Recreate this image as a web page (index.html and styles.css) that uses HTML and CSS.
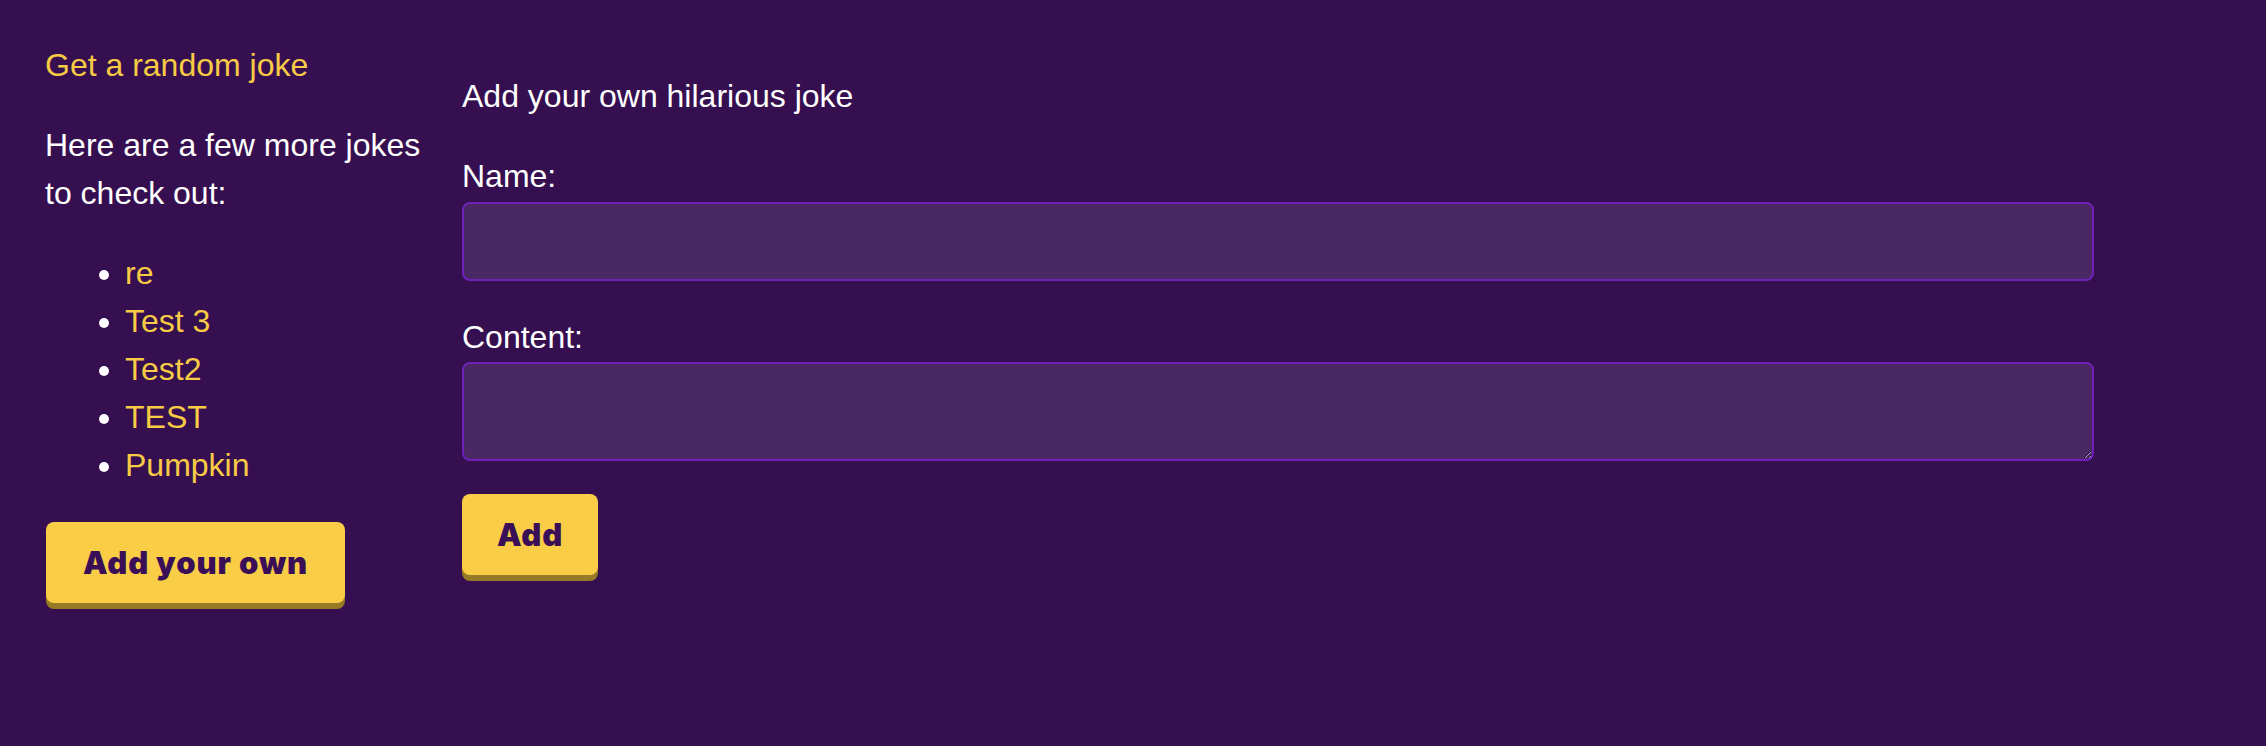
FILE: index.html
```html
<!DOCTYPE html>
<html lang="en">
<head>
<meta charset="utf-8">
<title>Jokes</title>
<link rel="stylesheet" href="styles.css">
</head>
<body>
<div class="page">
  <aside class="sidebar">
    <a class="random-link" href="#">Get a random joke</a>
    <p class="intro">Here are a few more jokes to check out:</p>
    <ul class="joke-list">
      <li><a href="#">re</a></li>
      <li><a href="#">Test 3</a></li>
      <li><a href="#">Test2</a></li>
      <li><a href="#">TEST</a></li>
      <li><a href="#">Pumpkin</a></li>
    </ul>
    <button class="btn" type="button">Add your own</button>
  </aside>
  <main class="main">
    <p class="heading">Add your own hilarious joke</p>
    <form class="joke-form">
      <label class="field-label" for="name">Name:</label>
      <input class="field-input" id="name" type="text">
      <label class="field-label" for="content">Content:</label>
      <textarea class="field-input field-textarea" id="content"></textarea>
      <div class="actions">
        <button class="btn btn-small" type="submit">Add</button>
      </div>
    </form>
  </main>
</div>
</body>
</html>
```
FILE: styles.css
```css
html, body {
  margin: 0;
  padding: 0;
  background: #360f50;
  height: 100%;
}

body {
  font-family: "Liberation Sans", Arial, Helvetica, sans-serif;
  font-size: 32px;
  line-height: 48px;
  color: #ffffff;
}

.page {
  display: flex;
  align-items: flex-start;
  gap: 31px;
  padding: 41px 0 0 45px;
}

.sidebar {
  width: 386px;
  flex: none;
  display: flex;
  flex-direction: column;
  align-items: flex-start;
}

a {
  color: #f8cb45;
  text-decoration: none;
}

.random-link {
  display: block;
}

.intro {
  margin: 32px 0 0;
}

.joke-list {
  margin: 32px 0 0;
  padding-left: 80px;
}

.joke-list li {
  height: 48px;
}

.btn {
  font-family: Inter, "Open Sans", sans-serif;
  font-weight: 900;
  font-size: 31px;
  letter-spacing: 0.9px;
  color: #3a0f58;
  background: #f9cd46;
  border: none;
  border-radius: 8px;
  height: 81px;
  padding: 0 37px;
  box-shadow: 0 6px 0 #967a25;
  cursor: pointer;
}

.btn-small {
  padding: 0 35px;
}

.sidebar .btn {
  margin: 33px 0 0 1px;
}

.main {
  width: 1632px;
  flex: none;
  padding-top: 31px;
}

.heading {
  margin: 0;
}

.joke-form {
  display: flex;
  flex-direction: column;
  margin-top: 32px;
}

.field-label {
  display: block;
}

.field-input {
  box-sizing: border-box;
  width: 100%;
  margin: 2px 0 0;
  background: #4a2864;
  border: 2px solid #6e20b8;
  border-radius: 8px;
  color: #ffffff;
  font-family: "Liberation Sans", Arial, sans-serif;
  font-size: 32px;
  padding: 10px 16px;
  outline: none;
}

input.field-input {
  height: 79px;
  margin-bottom: 32px;
}

.field-textarea {
  height: 99px;
  margin-top: 1px;
  resize: vertical;
}

.actions {
  margin-top: 33px;
}
```
